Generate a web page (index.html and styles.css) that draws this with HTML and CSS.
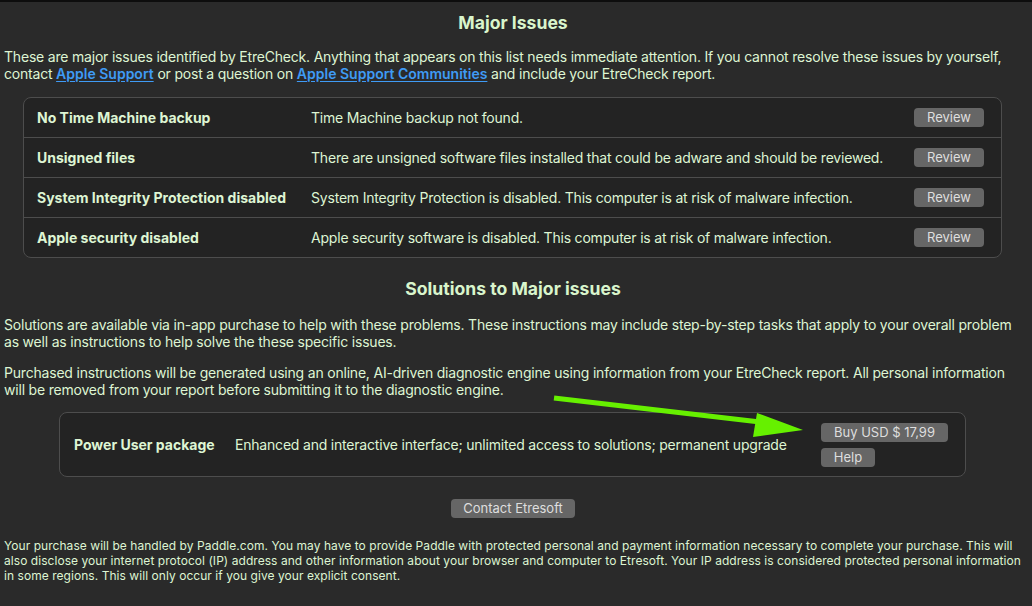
FILE: index.html
```html
<!DOCTYPE html>
<html lang="en">
<head>
<meta charset="utf-8">
<title>EtreCheck - Major Issues</title>
<link rel="stylesheet" href="styles.css">
</head>
<body>
<main class="page">
  <h1 class="title">Major Issues</h1>
  <p class="text">These are major issues identified by EtreCheck. Anything that appears on this list needs immediate attention. If you cannot resolve these issues by yourself, contact <a class="link" href="#">Apple Support</a> or post a question on <a class="link" href="#">Apple Support Communities</a> and include your EtreCheck report.</p>

  <div class="issues">
    <div class="issue">
      <div class="issue-name">No Time Machine backup</div>
      <div class="issue-desc">Time Machine backup not found.</div>
      <button class="btn btn-review">Review</button>
    </div>
    <div class="issue">
      <div class="issue-name">Unsigned files</div>
      <div class="issue-desc">There are unsigned software files installed that could be adware and should be reviewed.</div>
      <button class="btn btn-review">Review</button>
    </div>
    <div class="issue">
      <div class="issue-name">System Integrity Protection disabled</div>
      <div class="issue-desc">System Integrity Protection is disabled. This computer is at risk of malware infection.</div>
      <button class="btn btn-review">Review</button>
    </div>
    <div class="issue">
      <div class="issue-name">Apple security disabled</div>
      <div class="issue-desc">Apple security software is disabled. This computer is at risk of malware infection.</div>
      <button class="btn btn-review">Review</button>
    </div>
  </div>

  <h2 class="title title-2">Solutions to Major issues</h2>
  <p class="text text-sol">Solutions are available via in-app purchase to help with these problems. These instructions may include step-by-step tasks that apply to your overall problem as well as instructions to help solve the these specific issues.</p>
  <p class="text text-sol2">Purchased instructions will be generated using an online, AI-driven diagnostic engine using information from your EtreCheck report. All personal information will be removed from your report before submitting it to the diagnostic engine.</p>

  <div class="package-wrap">
    <div class="package">
      <div class="package-name">Power User package</div>
      <div class="package-desc">Enhanced and interactive interface; unlimited access to solutions; permanent upgrade</div>
      <div class="package-actions">
        <button class="btn btn-buy">Buy USD $ 17,99</button>
        <button class="btn btn-help">Help</button>
      </div>
    </div>
    <svg class="arrow" width="270" height="50" viewBox="0 0 270 50" aria-hidden="true">
      <line x1="4" y1="10" x2="210" y2="34" stroke="#66f000" stroke-width="5" stroke-linecap="butt"/>
      <polygon points="207,25 203,49 253,42" fill="#66f000"/>
    </svg>
  </div>

  <div class="contact-row">
    <button class="btn btn-contact">Contact Etresoft</button>
  </div>

  <p class="footer">Your purchase will be handled by Paddle.com. You may have to provide Paddle with protected personal and payment information necessary to complete your purchase. This will also disclose your internet protocol (IP) address and other information about your browser and computer to Etresoft. Your IP address is considered protected personal information in some regions. This will only occur if you give your explicit consent.</p>
</main>
</body>
</html>
```

FILE: styles.css
```css
* { box-sizing: border-box; }

html, body {
  margin: 0;
  padding: 0;
  background: #2a2a2a;
}

body {
  border-top: 2px solid #0d0d0d;
  font-family: Inter, Roboto, "Liberation Sans", Arial, sans-serif;
  color: #def5d3;
  height: 606px;
  overflow: hidden;
}

.page {
  padding: 0 4px 0 4px;
  display: flex;
  flex-direction: column;
}

.title {
  margin: 11px 0 0;
  padding-right: 6px;
  font-size: 17.6px;
  line-height: 20px;
  font-weight: 700;
  text-align: center;
  color: #d9f5cc;
}

.title-2 {
  margin-top: 21px;
}

.text {
  margin: 15px 0 0;
  font-size: 14px;
  line-height: 17px;
  letter-spacing: -0.2px;
}

.text-sol { margin-top: 17px; }
.text-sol2 { margin-top: 14px; }

.link {
  color: #3f9bf5;
  font-weight: 600;
  letter-spacing: 0;
  line-height: 17px;
  text-decoration: underline;
  text-underline-offset: 2px;
}

.issues {
  margin: 15px 26px 0 19px;
  border: 1px solid #4d4d4d;
  border-radius: 8px;
  background: #232323;
  overflow: hidden;
}

.issue {
  display: grid;
  grid-template-columns: 274px 1fr auto;
  align-items: center;
  height: 40px;
  padding: 0 17px 0 13px;
  border-top: 1px solid #4d4d4d;
  font-size: 14px;
}

.issue:first-child { border-top: 0; height: 39px; }

.issue-name { font-weight: 700; }

.issue-desc { letter-spacing: -0.2px; }

.btn {
  font-family: inherit;
  font-size: 13px;
  line-height: 19px;
  height: 19px;
  padding: 0 12px;
  border: 0;
  border-radius: 4px;
  background: #666666;
  color: #dedede;
  cursor: default;
}

.btn-review { width: 70px; padding: 0; }

.package-wrap {
  position: relative;
  margin-top: 14px;
  display: flex;
  justify-content: flex-start;
}

.package {
  width: 907px;
  height: 65px;
  margin-left: 55px;
  border: 1px solid #4d4d4d;
  border-radius: 8px;
  background: #232323;
  display: flex;
  align-items: center;
  padding: 0 17px 0 14px;
  font-size: 14px;
}

.package-name {
  width: 161px;
  font-weight: 700;
  flex: none;
}

.package-desc { flex: 1; letter-spacing: -0.2px; }

.package-actions {
  display: flex;
  flex-direction: column;
  align-items: flex-start;
  gap: 6px;
  width: 127px;
  flex: none;
}

.btn-buy { width: 127px; padding: 0; }
.btn-help { width: 54px; padding: 0; }

.arrow {
  position: absolute;
  left: 546px;
  top: -24px;
}

.contact-row {
  display: flex;
  justify-content: center;
  margin-top: 22px;
  padding-right: 6px;
}

.btn-contact { width: 124px; padding: 0; font-size: 13px; }

.footer {
  margin: 20px 0 0;
  font-size: 12px;
  line-height: 15px;
  letter-spacing: 0.05px;
}
```
